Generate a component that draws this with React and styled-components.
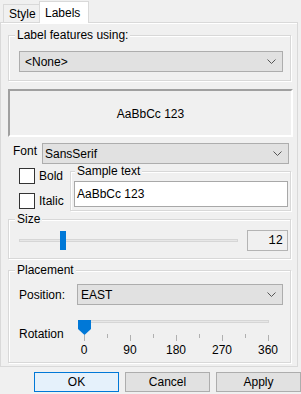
import React from 'react'
import styled, { createGlobalStyle } from 'styled-components'

const GlobalStyle = createGlobalStyle`
  html, body {
    margin: 0;
    padding: 0;
    background: #f0f0f0;
  }
  body {
    font-family: 'Liberation Sans', Arial, sans-serif;
    font-size: 12px;
    color: #000;
  }
  * { box-sizing: border-box; }
`

const Window = styled.div`
  width: 301px;
  height: 394px;
  display: flex;
  flex-direction: column;
  background: #f0f0f0;
  overflow: hidden;
`

const TabBar = styled.div`
  display: flex;
  align-items: flex-end;
  height: 22px;
  padding-left: 3px;
  position: relative;
  z-index: 1;
`

const Tab = styled.div`
  width: ${({ width }) => width}px;
  height: ${({ active }) => (active ? '22px' : '18px')};
  margin-bottom: ${({ active }) => (active ? '-1px' : '0')};
  margin-left: ${({ active }) => (active ? '-1px' : '0')};
  padding-left: 5px;
  display: flex;
  align-items: center;
  border: 1px solid #d9d9d9;
  border-bottom: none;
  background: ${({ active }) => (active ? '#fff' : '#f0f0f0')};
  line-height: 14px;
`

const Panel = styled.div`
  width: 298px;
  height: 345px;
  border: 1px solid #d9d9d9;
  box-shadow: inset 0 1px 0 #fff;
  padding-left: 7px;
  display: flex;
  flex-direction: column;
`

const Group = styled.fieldset`
  margin: ${({ mt }) => mt || 0}px 0 0 ${({ ml }) => ml || 0}px;
  padding: 0;
  width: ${({ width }) => width || 283}px;
  min-width: 0;
  border: 1px solid #d8d8d8;
  box-shadow: inset 1px 1px 0 #fff, 1px 1px 0 #fff;
`

const Legend = styled.legend`
  margin-left: ${({ ml }) => ml}px;
  padding: 0 2px;
  line-height: 14px;
  background: #f0f0f0;
`

const GroupBody = styled.div`
  padding: ${({ pad }) => pad};
  display: flex;
  flex-direction: column;
`

const Combo = styled.div`
  width: ${({ width }) => width}px;
  height: 21px;
  border: 1px solid #adadad;
  background: #e1e1e1;
  display: flex;
  align-items: center;
  justify-content: space-between;
  padding: 0 6px 0 ${({ pl }) => pl || 4}px;
  flex-shrink: 0;
`

const Chevron = () => (
  <svg width="9" height="5" viewBox="0 0 9 5">
    <polyline points="0.5,0.5 4.5,4.5 8.5,0.5" fill="none" stroke="#555" strokeWidth="1" />
  </svg>
)

const Preview = styled.div`
  margin-top: 8px;
  width: 285px;
  height: 48px;
  border: 2px solid;
  border-color: #a0a0a0 #fff #fff #a0a0a0;
  display: flex;
  align-items: center;
  justify-content: center;
  padding-top: 2px;
`

const Row = styled.div`
  display: flex;
  align-items: ${({ align }) => align || 'center'};
  margin-top: ${({ mt }) => mt || 0}px;
`

const FieldLabel = styled.span`
  width: ${({ width }) => width}px;
  margin-left: ${({ ml }) => ml || 0}px;
  margin-top: ${({ mt }) => mt || 0}px;
  align-self: ${({ top }) => (top ? 'flex-start' : 'center')};
  line-height: 14px;
  flex-shrink: 0;
`

const CheckColumn = styled.div`
  width: 51px;
  margin-left: 11px;
  padding-top: 4px;
  display: flex;
  flex-direction: column;
  gap: 9px;
`

const CheckRow = styled.label`
  display: flex;
  align-items: center;
  gap: 4px;
  line-height: 14px;
`

const CheckBox = styled.span`
  width: 16px;
  height: 16px;
  border: 1px solid #333;
  background: #fff;
`

const TextField = styled.div`
  height: 26px;
  border: 1px solid #a8a8a8;
  background: #fff;
  display: flex;
  align-items: center;
  padding-left: 2px;
`

const Track = styled.div`
  height: 3px;
  background: #e7e7e7;
  border: 1px solid #d6d6d6;
  margin: ${({ margin }) => margin || 0};
`

const SizeSlider = styled.div`
  position: relative;
  width: 219px;
  height: 21px;
  display: flex;
  flex-direction: column;
  justify-content: center;
`

const BarThumb = styled.div`
  position: absolute;
  top: 1px;
  left: ${({ left }) => left}px;
  width: 6px;
  height: 19px;
  background: #0078d7;
`

const Spinner = styled.div`
  width: 41px;
  height: 21px;
  margin-left: 9px;
  border: 1px solid #b4b4b4;
  background: #f0f0f0;
  display: flex;
  align-items: center;
  justify-content: flex-end;
  padding-right: 4px;
  font-family: 'Liberation Mono', 'Courier New', monospace;
  font-size: 12px;
`

const RotSlider = styled.div`
  width: 215px;
  display: flex;
  flex-direction: column;
`

const TrackArea = styled.div`
  position: relative;
  height: 16px;
  padding-top: 2px;
`

const PointerThumb = styled.svg`
  position: absolute;
  top: 2px;
  left: 9px;
`

const Ticks = styled.div`
  height: 7px;
  margin: 0 14px 0 15px;
  display: flex;
  justify-content: space-between;
  align-items: flex-start;
`

const Tick = styled.span`
  width: 1px;
  height: ${({ major }) => (major ? 6 : 4)}px;
  margin-top: ${({ major }) => (major ? 1 : 0)}px;
  background: #b0b0b0;
`

const TickLabels = styled.div`
  margin-top: 2px;
  display: flex;
  justify-content: space-between;
`

const TickLabel = styled.span`
  width: 30px;
  text-align: center;
  line-height: 14px;
`

const ButtonBar = styled.div`
  display: flex;
  gap: 6px;
  margin-top: 5px;
  padding-left: 34px;
`

const Button = styled.button`
  width: 85px;
  height: 20px;
  padding: 0;
  font-family: inherit;
  font-size: 12px;
  color: #000;
  border: 1px solid ${({ primary }) => (primary ? '#0078d7' : '#adadad')};
  background: ${({ primary }) => (primary ? '#e5f1fb' : '#e1e1e1')};
`

export default function App() {
  const ticks = [0, 1, 2, 3, 4, 5, 6, 7, 8]
  return (
    <Window>
      <GlobalStyle />
      <TabBar>
        <Tab width={37}>Style</Tab>
        <Tab width={50} active>
          Labels
        </Tab>
      </TabBar>
      <Panel>
        <Group mt={5}>
          <Legend ml={6}>Label features using:</Legend>
          <GroupBody pad="9px 7px 8px 10px">
            <Combo width={264} pl={5}>
              <span>&lt;None&gt;</span>
              <Chevron />
            </Combo>
          </GroupBody>
        </Group>

        <Preview>AaBbCc 123</Preview>

        <Row mt={6}>
          <FieldLabel width={29} ml={5} top mt={1}>
            Font
          </FieldLabel>
          <Combo width={247} pl={2}>
            <span>SansSerif</span>
            <Chevron />
          </Combo>
        </Row>

        <Row align="flex-start">
          <CheckColumn>
            <CheckRow>
              <CheckBox />
              Bold
            </CheckRow>
            <CheckRow>
              <CheckBox />
              Italic
            </CheckRow>
          </CheckColumn>
          <Group width={221}>
            <Legend ml={4}>Sample text</Legend>
            <GroupBody pad="3px 2px 3px 3px">
              <TextField>AaBbCc 123</TextField>
            </GroupBody>
          </Group>
        </Row>

        <Group mt={1}>
          <Legend ml={6}>Size</Legend>
          <GroupBody pad="4px 2px 7px 10px">
            <Row>
              <SizeSlider>
                <Track />
                <BarThumb left={41} />
              </SizeSlider>
              <Spinner>12</Spinner>
            </Row>
          </GroupBody>
        </Group>

        <Group mt={4}>
          <Legend ml={6}>Placement</Legend>
          <GroupBody pad="7px 7px 5px 10px">
            <Row>
              <FieldLabel width={58}>Position:</FieldLabel>
              <Combo width={206} pl={3}>
                <span>EAST</span>
                <Chevron />
              </Combo>
            </Row>
            <Row mt={13} align="flex-start">
              <FieldLabel width={50} top mt={9}>
                Rotation
              </FieldLabel>
              <RotSlider>
                <TrackArea>
                  <Track margin="0 14px 0 9px" />
                  <PointerThumb width="13" height="15" viewBox="0 0 13 15">
                    <polygon points="0,0 13,0 13,9 6.5,15 0,9" fill="#0078d7" />
                  </PointerThumb>
                </TrackArea>
                <Ticks>
                  {ticks.map(t => (
                    <Tick key={t} major={t % 2 === 0} />
                  ))}
                </Ticks>
                <TickLabels>
                  {[0, 90, 180, 270, 360].map(v => (
                    <TickLabel key={v}>{v}</TickLabel>
                  ))}
                </TickLabels>
              </RotSlider>
            </Row>
          </GroupBody>
        </Group>
      </Panel>
      <ButtonBar>
        <Button primary>OK</Button>
        <Button>Cancel</Button>
        <Button>Apply</Button>
      </ButtonBar>
    </Window>
  )
}
